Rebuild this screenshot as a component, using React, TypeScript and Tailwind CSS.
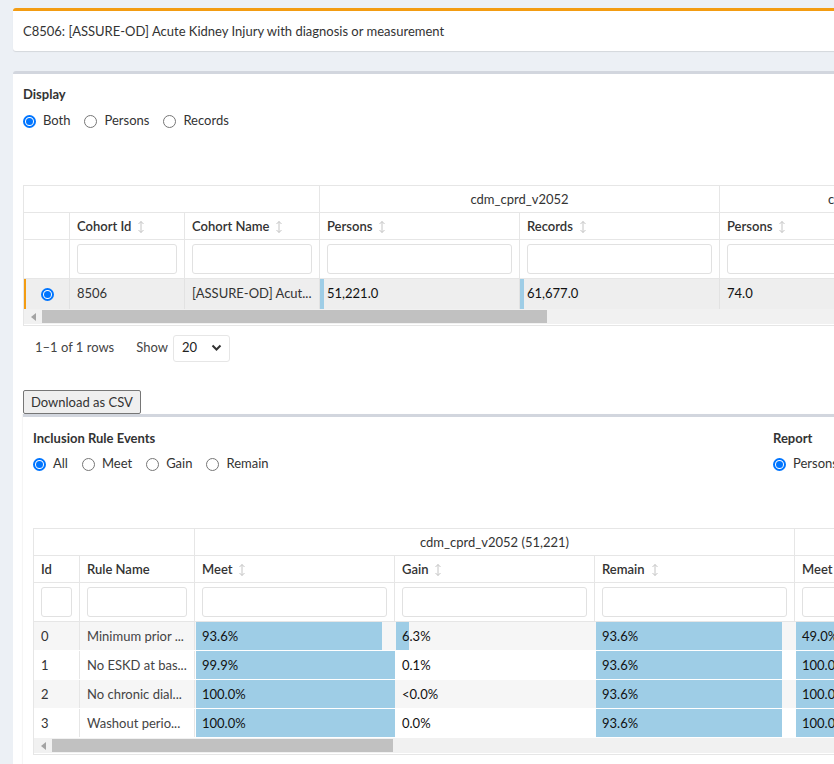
import React from 'react';

const font = { fontFamily: 'Lato, "Liberation Sans", sans-serif' };

function SortIcon() {
  return (
    <svg width="8" height="14" viewBox="0 0 8 14" className="ml-1.5 inline-block text-[#c4c4c4]">
      <path d="M4 1.5v11" stroke="currentColor" strokeWidth="1" />
      <path d="M1.5 4 4 1.5 6.5 4M1.5 10 4 12.5 6.5 10" stroke="currentColor" strokeWidth="1" fill="none" />
    </svg>
  );
}

function Radio({ label, checked }: { label: string; checked?: boolean }) {
  return (
    <label className="flex items-center gap-[7px] mr-[14px]">
      <span
        className={`w-[13px] h-[13px] rounded-full flex items-center justify-center ${
          checked ? 'border-2 border-[#0075ff]' : 'border border-[#767676]'
        }`}
      >
        {checked && <span className="w-[7px] h-[7px] rounded-full bg-[#0075ff]" />}
      </span>
      <span>{label}</span>
    </label>
  );
}

function Scrollbar({ left, width }: { left: number; width: number }) {
  return (
    <div className="h-[15px] bg-[#f1f1f1] flex items-center">
      <div className="w-[18px] flex justify-center">
        <svg width="5" height="8" viewBox="0 0 5 8">
          <path d="M5 0v8L0 4z" fill="#a3a3a3" />
        </svg>
      </div>
      <div className="h-[13px] bg-[#c1c1c1]" style={{ marginLeft: left - 18, width }} />
    </div>
  );
}

function FilterInput({ w }: { w: number }) {
  return (
    <div className="h-full flex items-center px-[7px] border-r border-[#e6e6e6] shrink-0" style={{ width: w }}>
      <div className="h-[30px] w-full rounded-[3px] border border-[#e1e1e1] bg-white" />
    </div>
  );
}

function BarCell({ w, pct, text, bg }: { w: number; pct: number; text: string; bg: string }) {
  return (
    <div className={`relative h-full shrink-0 ${bg}`} style={{ width: w }}>
      <div className="absolute left-[1px] top-0 bottom-0 bg-[#9ecde6]" style={{ width: (w - 1) * pct }} />
      <span className="relative pl-[7px] leading-[29px] text-[#111]">{text}</span>
    </div>
  );
}

const cohortCols = [46, 115, 135, 200, 200, 200, 200];
const ruleCols = [46, 115, 200, 200, 200, 200];

const rules = [
  { id: '0', name: 'Minimum prior ...', meet: [0.936, '93.6%'], gain: [0.063, '6.3%'], remain: [0.936, '93.6%'], meet2: [0.49, '49.0%'] },
  { id: '1', name: 'No ESKD at bas...', meet: [1, '99.9%'], gain: [0, '0.1%'], remain: [0.936, '93.6%'], meet2: [1, '100.0%'] },
  { id: '2', name: 'No chronic dial...', meet: [1, '100.0%'], gain: [0, '<0.0%'], remain: [0.936, '93.6%'], meet2: [1, '100.0%'] },
  { id: '3', name: 'Washout perio...', meet: [1, '100.0%'], gain: [0, '0.0%'], remain: [0.936, '93.6%'], meet2: [1, '100.0%'] },
] as const;

export default function App() {
  return (
    <div className="h-[764px] w-[834px] overflow-hidden bg-[#ecf0f5] text-[13px] text-[#333] whitespace-nowrap" style={font}>
      {/* Title box */}
      <div className="ml-[13px] mt-[8px] w-[900px] bg-white border-t-[3px] border-[#f39c12] rounded-[3px] shadow-[0_1px_1px_rgba(0,0,0,0.1)] h-[43px] flex items-center pl-[10px] pt-[2px]">
        C8506: [ASSURE-OD] Acute Kidney Injury with diagnosis or measurement
      </div>

      {/* Main box */}
      <div className="ml-[13px] mt-[20px] w-[900px] bg-white border-t-[3px] border-[#d2d6de] rounded-[3px] pt-[10px] pl-[10px] pb-[10px]">
        <div className="font-bold leading-[20px]">Display</div>
        <div className="flex items-center mt-[7px] h-[20px]">
          <Radio label="Both" checked />
          <Radio label="Persons" />
          <Radio label="Records" />
        </div>

        {/* Cohort table */}
        <div className="mt-[54px] border border-[#e6e6e6] w-[1200px]">
          <div className="flex h-[27px] border-b border-[#e6e6e6]">
            <div className="border-r border-[#e6e6e6] shrink-0" style={{ width: 296 }} />
            <div className="border-r border-[#e6e6e6] flex items-center justify-center shrink-0 pt-[1px]" style={{ width: 400 }}>
              cdm_cprd_v2052
            </div>
            <div className="flex items-center shrink-0 pl-[108px] pt-[1px]" style={{ width: 400 }}>
              cdm_optum_extended_dod_v2323
            </div>
          </div>
          <div className="flex h-[27px] border-b border-[#e6e6e6] font-semibold">
            {['', 'Cohort Id', 'Cohort Name', 'Persons', 'Records', 'Persons', 'Records'].map((h, i) => (
              <div
                key={i}
                className="border-r border-[#e6e6e6] flex items-center px-[7px] shrink-0 pt-[2px]"
                style={{ width: cohortCols[i] }}
              >
                {h && (
                  <>
                    {h}
                    <SortIcon />
                  </>
                )}
              </div>
            ))}
          </div>
          <div className="flex h-[39px] border-b border-[#e6e6e6]">
            <div className="border-r border-[#e6e6e6] shrink-0" style={{ width: 46 }} />
            {cohortCols.slice(1).map((w, i) => (
              <FilterInput key={i} w={w} />
            ))}
          </div>
          <div className="flex h-[30px] bg-[#eeeeee]">
            <div className="border-l-2 border-[#f39c12] border-r border-r-[#e2e2e2] flex items-center justify-center shrink-0" style={{ width: 46 }}>
              <span className="w-[13px] h-[13px] rounded-full border-2 border-[#0075ff] bg-white flex items-center justify-center">
                <span className="w-[7px] h-[7px] rounded-full bg-[#0075ff]" />
              </span>
            </div>
            <div className="border-r border-[#e2e2e2] flex items-center px-[7px] shrink-0" style={{ width: 115 }}>8506</div>
            <div className="border-r border-[#e2e2e2] flex items-center px-[7px] shrink-0" style={{ width: 135 }}>[ASSURE-OD] Acut...</div>
            {['51,221.0', '61,677.0'].map((v) => (
              <div key={v} className="border-r border-[#e2e2e2] flex items-center shrink-0 text-[#111]" style={{ width: 200 }}>
                <span className="w-[4px] h-full bg-[#9ecde6] mr-[3px]" />
                {v}
              </div>
            ))}
            <div className="border-r border-[#e2e2e2] flex items-center px-[7px] shrink-0 text-[#111]" style={{ width: 200 }}>74.0</div>
            <div className="flex items-center shrink-0 text-[#111]" style={{ width: 200 }}>
              <span className="w-[4px] h-full bg-[#9ecde6] mr-[3px]" />
              112.0
            </div>
          </div>
          <Scrollbar left={18} width={505} />
          <div className="h-[1px]" />
        </div>

        <div className="flex items-center h-[44px] pl-[12px] text-[#444]">
          <span>1–1 of 1 rows</span>
          <span className="ml-[22px]">Show</span>
          <div className="ml-[5px] h-[27px] w-[57px] border border-[#e6e6e6] rounded-[3px] flex items-center justify-between pl-[8px] pr-[7px]">
            <span className="text-[#222]">20</span>
            <svg width="11" height="8" viewBox="0 0 11 8">
              <path d="M1.5 1.5 5.5 5.5 9.5 1.5" stroke="#333" strokeWidth="2" fill="none" />
            </svg>
          </div>
        </div>

        <button className="mt-[20px] h-[24px] px-[7px] bg-[#efefef] border border-[#767676] rounded-[2px] text-[#333] leading-none">
          Download as CSV
        </button>

        {/* Inclusion rule box */}
        <div className="border-t-[3px] border-[#d2d6de] pt-[11px] pl-[10px] shadow-[-1px_0_1px_rgba(0,0,0,0.04)]">
          <div className="flex">
            <div className="w-[740px] shrink-0">
              <div className="font-bold leading-[20px]">Inclusion Rule Events</div>
              <div className="flex items-center mt-[6px] h-[20px]">
                <Radio label="All" checked />
                <Radio label="Meet" />
                <Radio label="Gain" />
                <Radio label="Remain" />
              </div>
            </div>
            <div>
              <div className="font-bold leading-[20px]">Report</div>
              <div className="flex items-center mt-[6px] h-[20px]">
                <Radio label="Persons" checked />
              </div>
            </div>
          </div>

          <div className="mt-[54px] border border-[#e6e6e6] w-[1200px]">
            <div className="flex h-[27px] border-b border-[#e6e6e6]">
              <div className="border-r border-[#e6e6e6] shrink-0" style={{ width: 161 }} />
              <div className="border-r border-[#e6e6e6] flex items-center justify-center shrink-0 pt-[1px]" style={{ width: 600 }}>
                cdm_cprd_v2052 (51,221)
              </div>
              <div className="shrink-0" style={{ width: 400 }} />
            </div>
            <div className="flex h-[27px] border-b border-[#e6e6e6] font-semibold">
              {['Id', 'Rule Name', 'Meet', 'Gain', 'Remain', 'Meet'].map((h, i) => (
                <div
                  key={i}
                  className="border-r border-[#e6e6e6] flex items-center px-[7px] shrink-0 pt-[2px]"
                  style={{ width: ruleCols[i] }}
                >
                  {h}
                  {i >= 2 && <SortIcon />}
                </div>
              ))}
            </div>
            <div className="flex h-[39px] border-b border-[#e6e6e6]">
              {ruleCols.map((w, i) => (
                <FilterInput key={i} w={w} />
              ))}
            </div>
            {rules.map((r, i) => {
              const bg = i % 2 === 0 ? 'bg-[#f6f6f6]' : 'bg-white';
              return (
                <div key={r.id} className={`flex h-[29px] border-b border-white ${bg}`}>
                  <div className="border-r border-[#e6e6e6] flex items-center px-[7px] shrink-0 pt-[1px]" style={{ width: 46 }}>
                    {r.id}
                  </div>
                  <div className="border-r border-[#e6e6e6] flex items-center px-[7px] shrink-0 text-[#444] pt-[1px]" style={{ width: 115 }}>
                    {r.name}
                  </div>
                  <BarCell w={200} pct={r.meet[0]} text={r.meet[1]} bg={bg} />
                  <BarCell w={200} pct={r.gain[0]} text={r.gain[1]} bg={bg} />
                  <BarCell w={200} pct={r.remain[0]} text={r.remain[1]} bg={bg} />
                  <BarCell w={200} pct={r.meet2[0]} text={r.meet2[1]} bg={bg} />
                </div>
              );
            })}
            <Scrollbar left={18} width={341} />
            <div className="h-[1px]" />
          </div>

          <div className="flex items-center h-[47px] pl-[12px] text-[#444]">
            <span>1–4 of 4 rows</span>
            <span className="ml-[22px]">Show</span>
            <div className="ml-[5px] h-[27px] w-[57px] border border-[#e6e6e6] rounded-[3px]" />
          </div>
        </div>
      </div>
    </div>
  );
}
